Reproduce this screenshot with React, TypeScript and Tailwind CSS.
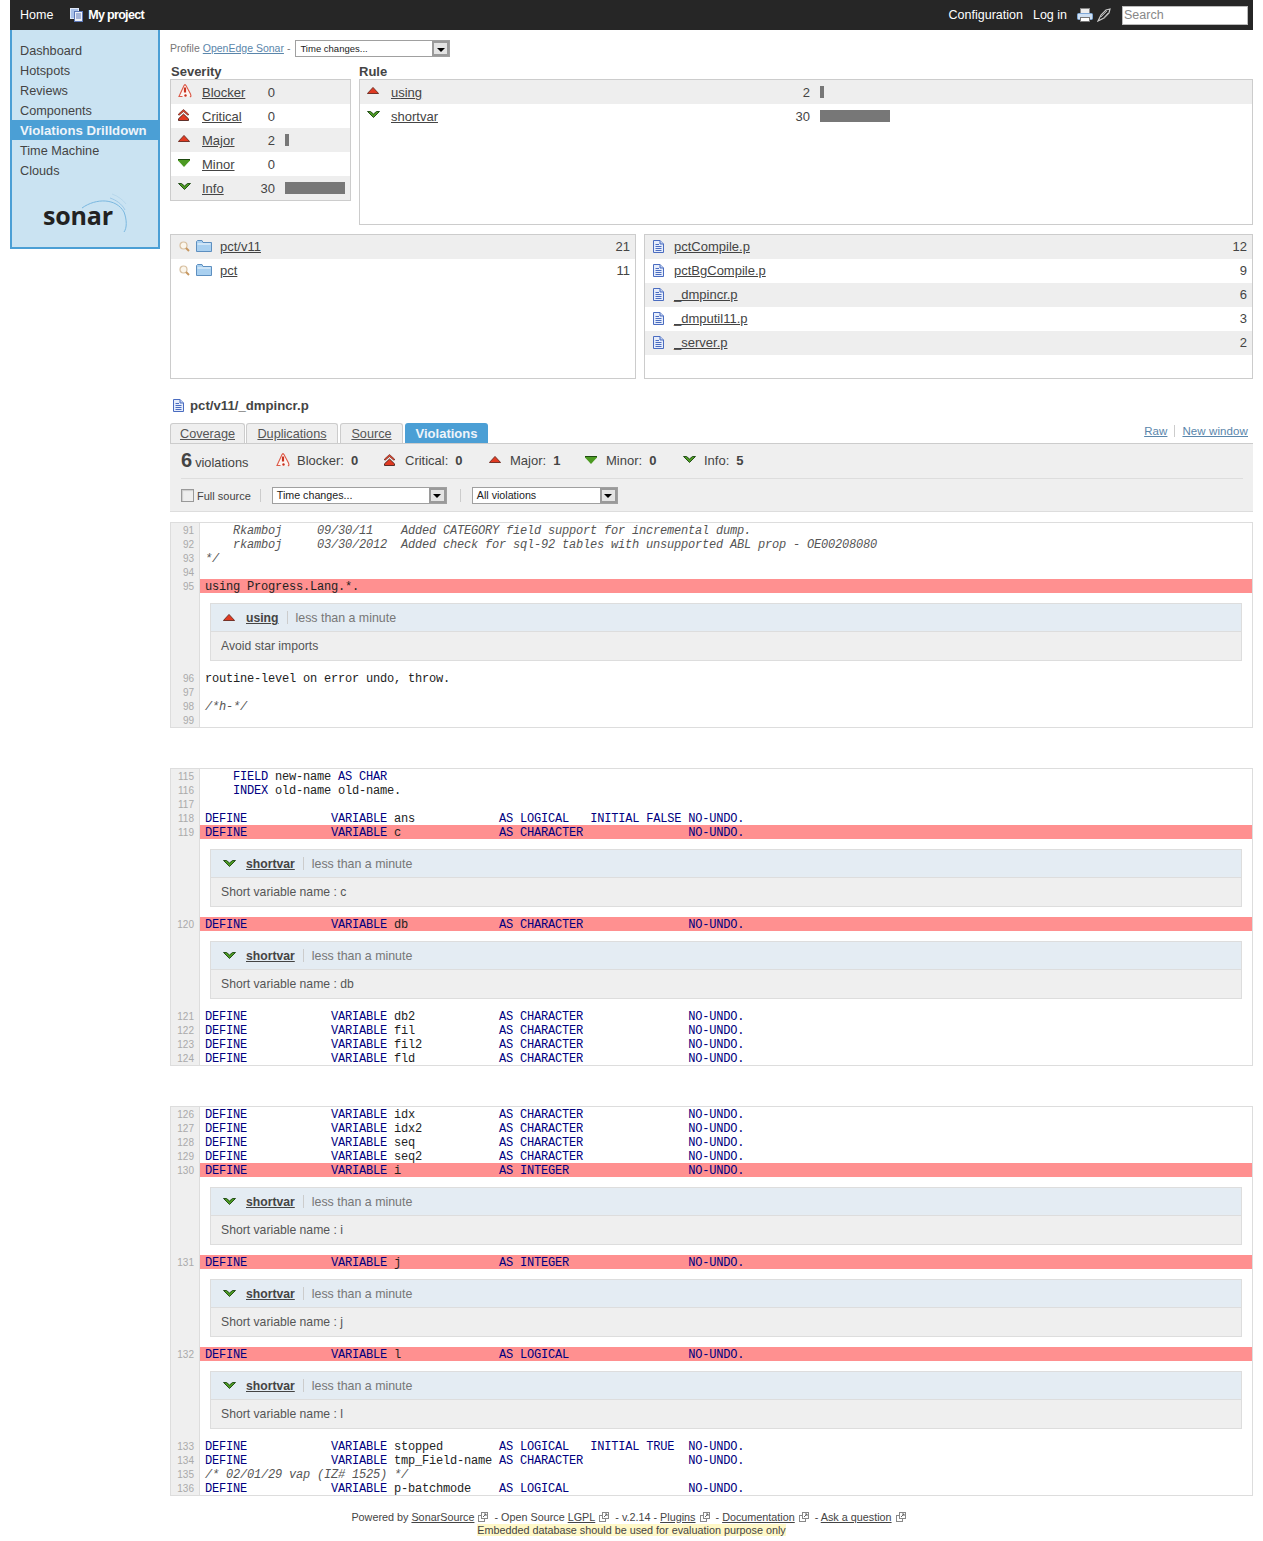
import React from 'react';

type Priority = 'blocker' | 'critical' | 'major' | 'minor' | 'info';

function PriorityIcon({ type }: { type: Priority }) {
  if (type === 'blocker') {
    return (
      <svg width="14" height="14" viewBox="0 0 14 14" className="block">
        <path d="M4.5 12.5 L1 12.5 L6 1.5 L7 0.5 L8 1.5 L12.5 10 L13 12 L12 13" fill="#fdf4f2" stroke="#dc5a48" strokeWidth="1.1" />
        <path d="M7 3.5 L7 8.5" stroke="#c8321f" strokeWidth="2.2" />
        <circle cx="7.5" cy="11.5" r="1.2" fill="#c8321f" />
      </svg>
    );
  }
  if (type === 'critical') {
    return (
      <svg width="11" height="12" viewBox="0 0 11 12" className="block">
        <path d="M5.5 0.5 L10.5 5 L10.5 6 L9.5 6 L5.5 2.6 L1.5 6 L0.5 6 L0.5 5 Z" fill="#e0452c" stroke="#5a1a10" strokeWidth="0.6" />
        <path d="M5.5 5 L10.5 9.8 L10.5 11.5 L0.5 11.5 L0.5 9.8 Z" fill="#e03a22" stroke="#3a1410" strokeWidth="0.8" />
      </svg>
    );
  }
  if (type === 'major') {
    return (
      <svg width="12" height="7" viewBox="0 0 12 7" className="block">
        <path d="M6 0.4 L11.6 6.5 L0.4 6.5 Z" fill="#e03a22" stroke="#5a1a10" strokeWidth="0.8" />
      </svg>
    );
  }
  if (type === 'minor') {
    return (
      <svg width="12" height="8" viewBox="0 0 12 8" className="block">
        <path d="M0 0 L12 0 L12 1.5 L6 8 L0 1.5 Z" fill="#4c9a22" />
        <path d="M0 0.5 L12 0.5" stroke="#1f4a10" strokeWidth="1" />
      </svg>
    );
  }
  return (
    <svg width="13" height="7" viewBox="0 0 13 7" className="block">
      <path d="M0.5 0.5 L3.5 0.5 L6.5 3 L9.5 0.5 L12.5 0.5 L6.5 6.5 Z" fill="#4c9a22" stroke="#1a4410" strokeWidth="0.9" />
    </svg>
  );
}

function FileIcon() {
  return (
    <svg width="11" height="13" viewBox="0 0 11 13" className="block">
      <path d="M0.5 0.5 L7 0.5 L10.5 4 L10.5 12.5 L0.5 12.5 Z" fill="#e6edfb" stroke="#4a6cc0" />
      <path d="M7 0.5 L7 4 L10.5 4" fill="#c0d0f0" stroke="#4a6cc0" />
      <path d="M2.5 4.5 L6 4.5 M2.5 6.5 L8.5 6.5 M2.5 8.5 L8.5 8.5 M2.5 10.5 L8.5 10.5" stroke="#4a6cc0" />
    </svg>
  );
}

function FolderIcon() {
  return (
    <svg width="16" height="12" viewBox="0 0 16 12" className="block">
      <path d="M0.5 1.5 L0.5 11.5 L15.5 11.5 L15.5 2.5 L7 2.5 L6 0.5 L1.5 0.5 Z" fill="#a9d0f0" stroke="#5d8fc0" />
      <path d="M1.5 4 L14.5 4" stroke="#dcecfa" strokeWidth="1.5" />
    </svg>
  );
}

function LensIcon() {
  return (
    <svg width="11" height="11" viewBox="0 0 11 11" className="block">
      <circle cx="4.5" cy="4.5" r="3.5" fill="#fbf6ec" stroke="#d8c0a0" strokeWidth="1.2" />
      <path d="M7 7 L10 10" stroke="#c89860" strokeWidth="2" />
    </svg>
  );
}

function ExternalIcon() {
  return (
    <svg width="10" height="10" viewBox="0 0 10 10" className="ml-[4px] inline-block align-[-1px]">
      <rect x="0.5" y="3.5" width="6" height="6" fill="#fff" stroke="#888" />
      <rect x="3.5" y="0.5" width="6" height="6" fill="#fff" stroke="#888" />
      <path d="M5 5 L8 2 M6 2 L8 2 L8 4" fill="none" stroke="#666" />
    </svg>
  );
}

function FakeSelect({ label, className }: { label: string; className: string }) {
  return (
    <div className={`flex h-[17px] items-stretch border border-[#a0a0a0] bg-white text-[#222] ${className}`}>
      <span className="flex-1 pl-[4px] leading-[15px]">{label}</span>
      <span className="flex w-[17px] items-center justify-center border-[2px] border-[#9a9a9a] bg-[#e4e4e4]">
        <span className="mt-[2px] h-0 w-0 border-x-[4px] border-t-[4px] border-x-transparent border-t-black" />
      </span>
    </div>
  );
}

const severities: { type: Priority; name: string; count: number; bar: number }[] = [
  { type: 'blocker', name: 'Blocker', count: 0, bar: 0 },
  { type: 'critical', name: 'Critical', count: 0, bar: 0 },
  { type: 'major', name: 'Major', count: 2, bar: 4 },
  { type: 'minor', name: 'Minor', count: 0, bar: 0 },
  { type: 'info', name: 'Info', count: 30, bar: 60 },
];

const rules: { type: Priority; name: string; count: number; bar: number }[] = [
  { type: 'major', name: 'using', count: 2, bar: 4 },
  { type: 'info', name: 'shortvar', count: 30, bar: 70 },
];

const files = [
  { name: 'pctCompile.p', count: 12 },
  { name: 'pctBgCompile.p', count: 9 },
  { name: '_dmpincr.p', count: 6 },
  { name: '_dmputil11.p', count: 3 },
  { name: '_server.p', count: 2 },
];

const summary: { type: Priority; name: string; value: number; className: string }[] = [
  { type: 'blocker', name: 'Blocker:', value: 0, className: 'w-[108px]' },
  { type: 'critical', name: 'Critical:', value: 0, className: 'w-[105px]' },
  { type: 'major', name: 'Major:', value: 1, className: 'w-[96px]' },
  { type: 'minor', name: 'Minor:', value: 0, className: 'w-[98px]' },
  { type: 'info', name: 'Info:', value: 5, className: 'w-[80px]' },
];

const KEYWORDS = /(\b(?:DEFINE|VARIABLE|AS|CHARACTER|LOGICAL|INTEGER|INITIAL|FALSE|TRUE|FIELD|INDEX|CHAR)\b|NO-UNDO\.)/g;

function def(name: string, type: string, extra = '') {
  const tail = extra ? `${type.padEnd(10)}${extra}` : type.padEnd(24);
  return `DEFINE            VARIABLE ${name.padEnd(15)}AS ${tail}NO-UNDO.`;
}

function CodeText({ text, comment }: { text: string; comment?: boolean }) {
  if (comment) return <span className="italic text-[#555]">{text}</span>;
  const parts = text.split(KEYWORDS);
  return (
    <>
      {parts.map((part, i) =>
        i % 2 === 1 ? (
          <span key={i} className="text-[#000080]">
            {part}
          </span>
        ) : (
          <span key={i}>{part}</span>
        ),
      )}
    </>
  );
}

function CodeLine({ n, text, comment, hit }: { n: number; text: string; comment?: boolean; hit?: boolean }) {
  return (
    <div className="flex h-[14px]">
      <div className="w-[28px] shrink-0 bg-[#efefef] pr-[5px] text-right font-['Liberation_Sans',sans-serif] text-[10px] leading-[16px] tracking-normal text-[#aaa]">
        {n}
      </div>
      <div className={`flex-1 whitespace-pre border-l border-[#ddd] pl-[5px] leading-[16px] ${hit ? 'bg-[#ff9090]' : ''}`}>
        <CodeText text={text} comment={comment} />
      </div>
    </div>
  );
}

function Issue({ type, rule, message }: { type: Priority; rule: string; message: string }) {
  return (
    <div className="flex">
      <div className="w-[28px] shrink-0 bg-[#efefef]" />
      <div className="flex-1 border-l border-[#ddd] px-[10px] py-[10px] font-['Liberation_Sans',sans-serif] text-[12.2px] tracking-normal">
        <div className="border border-[#ddd]">
          <div className="flex h-[28px] items-center border-b border-[#ddd] bg-[#e4ecf3] pl-[12px]">
            <span className="w-[23px]">
              <PriorityIcon type={type} />
            </span>
            <span className="pt-[2px] font-bold text-[#444] underline">{rule}</span>
            <span className="mx-[8px] h-[13px] w-px bg-[#ccc]" />
            <span className="pt-[2px] text-[12.4px] text-[#777]">less than a minute</span>
          </div>
          <div className="flex h-[28px] items-center bg-[#efefef] pl-[10px] text-[#555]">{message}</div>
        </div>
      </div>
    </div>
  );
}

function CodeBlock({ children, className }: { children: React.ReactNode; className: string }) {
  return (
    <div className={`border border-[#ddd] font-['Liberation_Mono',monospace] text-[12px] tracking-[-0.2px] text-[#222] ${className}`}>
      {children}
    </div>
  );
}

export default function App() {
  return (
    <div className="w-[1263px] bg-white px-[10px] font-['Liberation_Sans',Arial,sans-serif] text-[#444]">
      <header className="flex h-[30px] items-center bg-[#262626] pl-[10px] pr-[5px] text-[12.5px] text-white">
        <span>Home</span>
        <svg width="14" height="14" viewBox="0 0 14 14" className="ml-[17px]">
          <rect x="0.5" y="0.5" width="8" height="10" fill="#a8c0e8" stroke="#dfe8f8" />
          <rect x="4.5" y="3.5" width="8" height="10" fill="#eef2fa" stroke="#5c78b8" />
          <path d="M6 6 L11 6 M6 8 L11 8 M6 10 L11 10" stroke="#5c78b8" />
        </svg>
        <span className="ml-[4px] font-bold tracking-[-0.7px]">My project</span>
        <span className="ml-auto">Configuration</span>
        <span className="ml-[10px]">Log in</span>
        <svg width="16" height="15" viewBox="0 0 16 15" className="ml-[10px]">
          <rect x="3.5" y="0.5" width="9" height="5" fill="#eee" stroke="#888" />
          <rect x="0.5" y="5.5" width="15" height="6" rx="1" fill="#cfe0f2" stroke="#7ea8d8" />
          <rect x="3.5" y="9.5" width="9" height="4" fill="#fff" stroke="#777" />
        </svg>
        <svg width="14" height="14" viewBox="0 0 14 14" className="ml-[4px]">
          <path d="M1 13 L4 7 L9 2 L13 1 L12 5 L7 10 Z" fill="none" stroke="#ccc" strokeWidth="1.2" />
          <path d="M4 9 L10 3 M6 11 L11 5" stroke="#aaa" />
        </svg>
        <div className="ml-[11px] flex h-[19px] w-[126px] items-center border border-[#bbb] bg-white pl-[1px] text-[12.5px] text-[#888]">
          Search
        </div>
      </header>

      <div className="flex">
        <aside className="h-[219px] w-[150px] shrink-0 border-x-2 border-b-2 border-[#4b9fd5] bg-[#cae3f2] pt-[10px] text-[12.7px] text-[#444]">
          {['Dashboard', 'Hotspots', 'Reviews', 'Components'].map((item) => (
            <div key={item} className="h-[20px] pl-[8px] leading-[22px]">
              {item}
            </div>
          ))}
          <div className="h-[20px] bg-[#4b9fd5] pl-[8px] text-[13.2px] font-bold leading-[22px] text-[#eef4fa]">Violations Drilldown</div>
          {['Time Machine', 'Clouds'].map((item) => (
            <div key={item} className="h-[20px] pl-[8px] leading-[22px]">
              {item}
            </div>
          ))}
          <div className="relative h-[67px]">
            <span className="absolute left-[31px] top-[17px] font-['Open_Sans',sans-serif] text-[25px] font-bold leading-[36px] tracking-[-0.2px] text-[#222]">
              sonar
            </span>
            <svg width="60" height="50" viewBox="0 0 60 50" className="absolute left-[60px] top-[10px]">
              <path d="M10 18 C24 8 44 8 52 22 C55 30 55 38 52 42" fill="none" stroke="#7ab8e0" strokeWidth="1" />
              <path d="M38 8 C44 10 50 14 53 20" fill="none" stroke="#9cc8e8" strokeWidth="1" />
              <path d="M40 4 C46 6 51 10 54 14" fill="none" stroke="#b8d8ec" strokeWidth="1" />
            </svg>
          </div>
        </aside>

        <main className="ml-[10px] w-[1083px] pt-[10px]">
          <div className="flex h-[17px] items-center text-[10.5px] text-[#777]">
            <span>Profile</span>
            <span className="ml-[3px] text-[#5a86ab] underline">OpenEdge Sonar</span>
            <span className="ml-[3px] mr-[5px]">-</span>
            <FakeSelect label="Time changes..." className="w-[155px] text-[9.5px]" />
          </div>

          <div className="mt-[7px] flex gap-[8px]">
            <section className="w-[181px]">
              <h3 className="h-[15px] pl-[1px] text-[13px] font-bold leading-[16px] text-[#444]">Severity</h3>
              <div className="border border-[#ccc] text-[13px]">
                {severities.map((row, i) => (
                  <div
                    key={row.name}
                    className={`grid h-[24px] grid-cols-[31px_50px_23px_77px] items-center ${i % 2 === 0 ? 'bg-[#eee]' : ''}`}
                  >
                    <span className="mb-[3px] flex justify-start pl-[7px]">
                      <PriorityIcon type={row.type} />
                    </span>
                    <span className="pt-[2px] underline">{row.name}</span>
                    <span className="pt-[2px] text-right">{row.count}</span>
                    <span className="pl-[10px]">
                      {row.bar > 0 && <span className="block h-[12px] bg-[#777]" style={{ width: row.bar }} />}
                    </span>
                  </div>
                ))}
              </div>
            </section>
            <section className="flex-1">
              <h3 className="h-[15px] text-[13px] font-bold leading-[16px] text-[#444]">Rule</h3>
              <div className="h-[146px] border border-[#ccc] text-[13px]">
                {rules.map((row, i) => (
                  <div
                    key={row.name}
                    className={`grid h-[24px] grid-cols-[31px_389px_30px_1fr] items-center ${i % 2 === 0 ? 'bg-[#eee]' : ''}`}
                  >
                    <span className="mb-[3px] pl-[7px]">
                      <PriorityIcon type={row.type} />
                    </span>
                    <span className="pt-[2px] underline">{row.name}</span>
                    <span className="pt-[2px] text-right">{row.count}</span>
                    <span className="pl-[10px]">
                      <span className="block h-[12px] bg-[#777]" style={{ width: row.bar }} />
                    </span>
                  </div>
                ))}
              </div>
            </section>
          </div>

          <div className="mt-[9px] flex gap-[8px] text-[13px]">
            <section className="h-[145px] w-[466px] border border-[#ccc]">
              {[
                { name: 'pct/v11', count: 21 },
                { name: 'pct', count: 11 },
              ].map((row, i) => (
                <div key={row.name} className={`flex h-[24px] items-center pr-[5px] ${i === 0 ? 'bg-[#eee]' : ''}`}>
                  <span className="mb-[2px] ml-[8px]">
                    <LensIcon />
                  </span>
                  <span className="mb-[2px] ml-[6px]">
                    <FolderIcon />
                  </span>
                  <span className="ml-[8px] underline">{row.name}</span>
                  <span className="ml-auto">{row.count}</span>
                </div>
              ))}
            </section>
            <section className="h-[145px] flex-1 border border-[#ccc]">
              {files.map((row, i) => (
                <div key={row.name} className={`flex h-[24px] items-center pr-[5px] ${i % 2 === 0 ? 'bg-[#eee]' : ''}`}>
                  <span className="mb-[2px] ml-[8px]">
                    <FileIcon />
                  </span>
                  <span className="ml-[10px] underline">{row.name}</span>
                  <span className="ml-auto">{row.count}</span>
                </div>
              ))}
            </section>
          </div>

          <div className="mt-[18px] flex h-[16px] items-center pl-[3px]">
            <FileIcon />
            <span className="ml-[6px] pt-[2px] text-[13.2px] font-bold">pct/v11/_dmpincr.p</span>
          </div>

          <div className="mt-[10px] flex h-[20px] items-end text-[12.7px]">
            {[
              { name: 'Coverage', w: 'w-[75px]', gap: 'mr-[1px]' },
              { name: 'Duplications', w: 'w-[92px]', gap: 'mr-[2px]' },
              { name: 'Source', w: 'w-[63px]', gap: 'mr-[2px]' },
            ].map((tab) => (
              <span
                key={tab.name}
                className={`flex h-[20px] items-center justify-center rounded-t-[3px] border border-b-0 border-[#ccc] bg-[#efefef] pt-[2px] text-[#555] underline ${tab.w} ${tab.gap}`}
              >
                {tab.name}
              </span>
            ))}
            <span className="flex h-[20px] w-[83px] items-center justify-center rounded-t-[3px] bg-[#4b9fd5] pt-[2px] text-[13px] font-bold text-[#eef4fa]">
              Violations
            </span>
            <span className="ml-auto flex items-center pb-[3px] pr-[5px] text-[11.5px] tracking-[0.1px] text-[#5a86ab]">
              <span className="underline">Raw</span>
              <span className="mx-[7px] h-[12px] w-px bg-[#ccc]" />
              <span className="underline">New window</span>
            </span>
          </div>

          <div className="h-[69px] border-y border-[#ddd] border-t-[#ccc] bg-[#efefef] pl-[11px] pr-[10px] text-[13px]">
            <div className="flex h-[35px] items-center border-b border-[#ddd]">
              <span className="w-[95px]">
                <span className="text-[20px] font-bold leading-[20px]">6</span>
                <span className="ml-[3px] text-[12.8px]">violations</span>
              </span>
              {summary.map((item) => (
                <span key={item.name} className={`flex items-center ${item.className}`}>
                  <span className="mb-[3px] flex w-[21px]">
                    <PriorityIcon type={item.type} />
                  </span>
                  <span>{item.name}</span>
                  <span className="ml-[7px] font-bold">{item.value}</span>
                </span>
              ))}
            </div>
            <div className="flex h-[32px] items-center">
              <span className="h-[13px] w-[13px] border border-[#999] bg-[#eee] shadow-[inset_1px_1px_1px_#ccc]" />
              <span className="ml-[3px] pt-[2px] text-[11px]">Full source</span>
              <span className="ml-[9px] h-[13px] w-px bg-[#ccc]" />
              <span className="ml-[11px]">
                <FakeSelect label="Time changes..." className="w-[175px] text-[10.7px]" />
              </span>
              <span className="ml-[13px] h-[13px] w-px bg-[#ccc]" />
              <span className="ml-[11px]">
                <FakeSelect label="All violations" className="w-[146px] text-[10.7px]" />
              </span>
            </div>
          </div>

          <CodeBlock className="mt-[10px]">
            <CodeLine n={91} comment text="    Rkamboj     09/30/11    Added CATEGORY field support for incremental dump." />
            <CodeLine n={92} comment text="    rkamboj     03/30/2012  Added check for sql-92 tables with unsupported ABL prop - OE00208080" />
            <CodeLine n={93} comment text="*/" />
            <CodeLine n={94} text="" />
            <CodeLine n={95} hit text="using Progress.Lang.*." />
            <Issue type="major" rule="using" message="Avoid star imports" />
            <CodeLine n={96} text="routine-level on error undo, throw." />
            <CodeLine n={97} text="" />
            <CodeLine n={98} comment text="/*h-*/" />
            <CodeLine n={99} text="" />
          </CodeBlock>

          <CodeBlock className="mt-[40px]">
            <CodeLine n={115} text="    FIELD new-name AS CHAR" />
            <CodeLine n={116} text="    INDEX old-name old-name." />
            <CodeLine n={117} text="" />
            <CodeLine n={118} text={def('ans', 'LOGICAL', 'INITIAL FALSE ')} />
            <CodeLine n={119} hit text={def('c', 'CHARACTER')} />
            <Issue type="info" rule="shortvar" message="Short variable name : c" />
            <CodeLine n={120} hit text={def('db', 'CHARACTER')} />
            <Issue type="info" rule="shortvar" message="Short variable name : db" />
            <CodeLine n={121} text={def('db2', 'CHARACTER')} />
            <CodeLine n={122} text={def('fil', 'CHARACTER')} />
            <CodeLine n={123} text={def('fil2', 'CHARACTER')} />
            <CodeLine n={124} text={def('fld', 'CHARACTER')} />
          </CodeBlock>

          <CodeBlock className="mt-[40px]">
            <CodeLine n={126} text={def('idx', 'CHARACTER')} />
            <CodeLine n={127} text={def('idx2', 'CHARACTER')} />
            <CodeLine n={128} text={def('seq', 'CHARACTER')} />
            <CodeLine n={129} text={def('seq2', 'CHARACTER')} />
            <CodeLine n={130} hit text={def('i', 'INTEGER')} />
            <Issue type="info" rule="shortvar" message="Short variable name : i" />
            <CodeLine n={131} hit text={def('j', 'INTEGER')} />
            <Issue type="info" rule="shortvar" message="Short variable name : j" />
            <CodeLine n={132} hit text={def('l', 'LOGICAL')} />
            <Issue type="info" rule="shortvar" message="Short variable name : l" />
            <CodeLine n={133} text={def('stopped', 'LOGICAL', 'INITIAL TRUE  ')} />
            <CodeLine n={134} text={def('tmp_Field-name', 'CHARACTER')} />
            <CodeLine n={135} comment text="/* 02/01/29 vap (IZ# 1525) */" />
            <CodeLine n={136} text={def('p-batchmode', 'LOGICAL')} />
          </CodeBlock>
        </main>
      </div>

      <footer className="h-[45px] pt-[15px] text-center text-[10.8px] leading-[13px] text-[#444]">
        <div className="pr-[6px]">
          Powered by <span className="underline">SonarSource</span>
          <ExternalIcon /> &nbsp;- Open Source <span className="underline">LGPL</span>
          <ExternalIcon /> &nbsp;- v.2.14 - <span className="underline">Plugins</span>
          <ExternalIcon /> &nbsp;- <span className="underline">Documentation</span>
          <ExternalIcon /> &nbsp;- <span className="underline">Ask a question</span>
          <ExternalIcon />
        </div>
        <div>
          <span className="bg-[#fff8c8]">Embedded database should be used for evaluation purpose only</span>
        </div>
      </footer>
    </div>
  );
}
